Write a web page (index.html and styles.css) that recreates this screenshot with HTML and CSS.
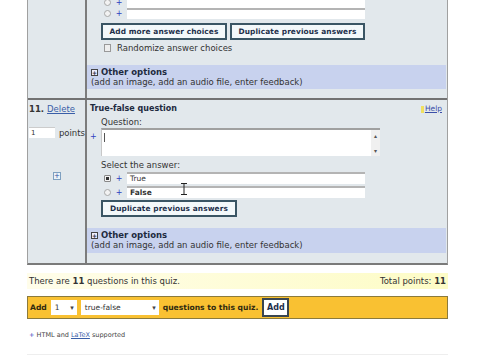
FILE: index.html
```html
<!DOCTYPE html>
<html>
<head>
<meta charset="utf-8">
<link rel="stylesheet" href="styles.css">
</head>
<body>
<div class="page">
  <div class="quiz">
    <div class="qrow prev">
      <div class="side"></div>
      <div class="main">
        <div class="ans"><span class="radio"></span><span class="plus">+</span><span class="field"></span></div>
        <div class="ans"><span class="radio"></span><span class="plus">+</span><span class="field"></span></div>
        <div class="btns">
          <button class="btn w126">Add more answer choices</button>
          <button class="btn w135">Duplicate previous answers</button>
        </div>
        <label class="rand"><span class="check"></span>Randomize answer choices</label>
        <div class="other">
          <div class="other-title"><span class="toggle">+</span>Other options</div>
          <div>(add an image, add an audio file, enter feedback)</div>
        </div>
      </div>
    </div>
    <div class="qrow cur">
      <div class="side">
        <div class="num">11. <a href="#" class="link">Delete</a></div>
        <div class="pts"><span class="ptbox">1</span><span>points</span></div>
        <span class="expand">+</span>
      </div>
      <div class="main">
        <div class="title"><b>True-false question</b><a href="#" class="help"><span class="helpicon"></span>Help</a></div>
        <div class="label">Question:</div>
        <div class="qline">
          <span class="plus2">+</span>
          <div class="textarea"><span class="caret"></span><span class="scroll"><span>&#9652;</span><span>&#9662;</span></span></div>
        </div>
        <div class="label sel">Select the answer:</div>
        <div class="ans tf"><span class="radio on"></span><span class="plus">+</span><span class="field">True</span></div>
        <div class="ans tf"><span class="radio"></span><span class="plus">+</span><span class="field"><b>False</b></span></div>
        <div class="btns b2">
          <button class="btn w136">Duplicate previous answers</button>
        </div>
        <div class="other o2">
          <div class="other-title"><span class="toggle">+</span>Other options</div>
          <div>(add an image, add an audio file, enter feedback)</div>
        </div>
      </div>
    </div>
  </div>
  <div class="summary">
    <span>There are <b>11</b> questions in this quiz.</span>
    <span>Total points: <b>11</b></span>
  </div>
  <div class="addbar">
    <b>Add</b>
    <span class="select s1">1<i>&#9662;</i></span>
    <span class="select s2">true-false<i>&#9662;</i></span>
    <b>questions to this quiz.</b>
    <button class="addbtn">Add</button>
  </div>
  <div class="note"><span class="blue">+</span> HTML and <a href="#" class="link">LaTeX</a> supported</div>
  <div class="rule"></div>
</div>
<svg class="ibeam" width="8" height="12" viewBox="0 0 8 12"><path d="M1 0.5h6M4 0.5v11M1 11.5h6" stroke="#222" stroke-width="1" fill="none"/></svg>
</body>
</html>
```
FILE: styles.css
```css
* { box-sizing: border-box; }
body {
  margin: 0;
  background: #fff;
  font-family: "DejaVu Sans", Verdana, sans-serif;
  font-size: 8.5px;
  color: #2a2a2a;
  position: relative;
  height: 360px;
  overflow: hidden;
}
.page { width: 421px; margin: -3px 0 0 27px; }
.quiz {
  background: #e2e8ec;
  border-left: 1px solid #a0a0a0;
  border-right: 1px solid #a0a0a0;
  border-bottom: 2px solid #7a7a7a;
}
.qrow { display: grid; grid-template-columns: 59px 1fr; }
.qrow.cur { border-top: 2px solid #727272; }
.side { border-right: 2px solid #7c7c7c; }
.main { padding-bottom: 9px; }
.cur .main { padding-bottom: 10px; }

.ans { display: flex; align-items: center; height: 11px; margin-left: 14px; }
.radio {
  width: 7px; height: 7px; margin-left: 3px;
  border: 1px solid #a8a8a8; border-radius: 50%; background: #f2f2f2;
}
.radio.on { border-radius: 1px; border-color: #888; background: radial-gradient(circle, #333 0 1.6px, #f2f2f2 2px); }
.plus { width: 16px; text-align: center; color: #2f3fc0; font-size: 8px; }
.field {
  width: 238px; height: 11px; background: #fff;
  border-top: 2px solid #b4b4b4; padding-left: 3px;
  line-height: 9px; font-size: 7.5px; color: #333;
}
.tf { height: 12px; margin-top: 2px; }
.tf .field { height: 12px; line-height: 10px; }

.btns { display: flex; gap: 3px; margin: 4px 0 0 14px; }
.b2 { margin-top: 2px; }
.btn {
  height: 17px; padding: 0; margin: 0;
  border: 2px solid #3a5564; background: #f3f8fa;
  font: bold 7.4px "DejaVu Sans", Verdana, sans-serif; color: #1d2f4b;
  white-space: nowrap; letter-spacing: 0.1px;
}
.w126 { width: 126px; }
.w135 { width: 135px; }
.w136 { width: 136px; }

.rand { display: flex; align-items: center; gap: 6px; height: 10px; margin: 3px 0 0 17px; color: #333; }
.check { width: 7px; height: 8px; border: 1px solid #999; background: #eee; }

.other {
  margin: 12px 1px 0 0; height: 24px; padding: 2px 4px;
  background: #c8d2ee; line-height: 10px; color: #333;
}
.o2 { margin-top: 11px; height: 25px; }
.other-title { font-weight: bold; display: flex; align-items: center; gap: 3px; color: #1e2a40; }
.toggle {
  width: 7px; height: 7px; border: 1px solid #444; background: #eef;
  font-size: 6px; line-height: 5px; text-align: center; font-weight: bold;
}

.num { padding: 4px 0 0 1px; line-height: 10px; font-weight: bold; color: #333; }
.num .link { font-weight: normal; }
.link { color: #3a5ea8; text-decoration: underline; }
.pts { display: flex; align-items: center; gap: 4px; margin: 13px 0 0 1px; color: #333; }
.ptbox {
  width: 26px; height: 11px; background: #fff; border-top: 1px solid #ccc;
  font-size: 7px; line-height: 10px; padding-left: 2px;
}
.expand {
  display: block; width: 8px; height: 8px; margin: 34px 0 0 25px;
  border: 1px solid #7fa0c0; background: #eaf2f8; color: #3050a0;
  font-size: 7px; line-height: 6px; text-align: center;
}

.title { display: flex; justify-content: space-between; padding: 4px 5px 0 3px; line-height: 10px; color: #1e2a40; font-size: 8px; }
.help { color: #3a4ea8; text-decoration: underline; font-size: 7.5px; display: flex; align-items: center; }
.helpicon { width: 3px; height: 7px; background: #f0e060; margin-right: 1px; }
.label { margin: 3px 0 0 14px; line-height: 10px; color: #333; }
.sel { margin-top: 4px; }
.qline { display: flex; margin-top: 1px; }
.plus2 { width: 14px; padding: 4px 0 0 3px; color: #2f3fc0; font-size: 8px; }
.textarea {
  width: 279px; height: 28px; background: #fff;
  border-top: 2px solid #a0a0a0; border-left: 1px solid #c8c8c8;
  display: flex; justify-content: space-between;
}
.caret { width: 1px; height: 9px; background: #555; margin: 3px 0 0 2px; }
.scroll {
  width: 9px; display: flex; flex-direction: column; justify-content: space-between;
  padding: 2px 0; background: #f0f0f0; color: #555; font-size: 6px; line-height: 7px; text-align: center;
}

.summary {
  display: flex; justify-content: space-between; align-items: center;
  margin-top: 8px; height: 16px; padding: 0 2px;
  background: linear-gradient(to right, #fffdea, #fdfcc6);
  color: #333;
}
.addbar {
  display: flex; align-items: center; gap: 4px;
  margin-top: 7px; height: 23px; padding-left: 2px;
  background: #f9c132; border: 1px solid #8b7a3c;
  color: #2f2a10; font-size: 7.6px;
}
.select {
  display: flex; justify-content: space-between; align-items: center;
  height: 15px; background: #fff; padding: 0 3px 0 4px;
  font-size: 7.5px; color: #333;
}
.select i { font-style: normal; font-size: 7px; color: #444; }
.s1 { width: 26px; }
.s2 { width: 78px; }
.addbtn {
  width: 27px; height: 19px; padding: 0; margin: 0;
  background: #fff; border: 2px solid #3a4650;
  font: bold 8px "DejaVu Sans", Verdana, sans-serif; color: #1d2f4b;
}
.note { margin: 12px 0 0 2px; font-size: 6.5px; color: #444; }
.blue { color: #2f3fc0; }
.rule { margin-top: 15px; height: 1px; background: #eeeeee; }
.ibeam { position: absolute; left: 180px; top: 183px; }
```
